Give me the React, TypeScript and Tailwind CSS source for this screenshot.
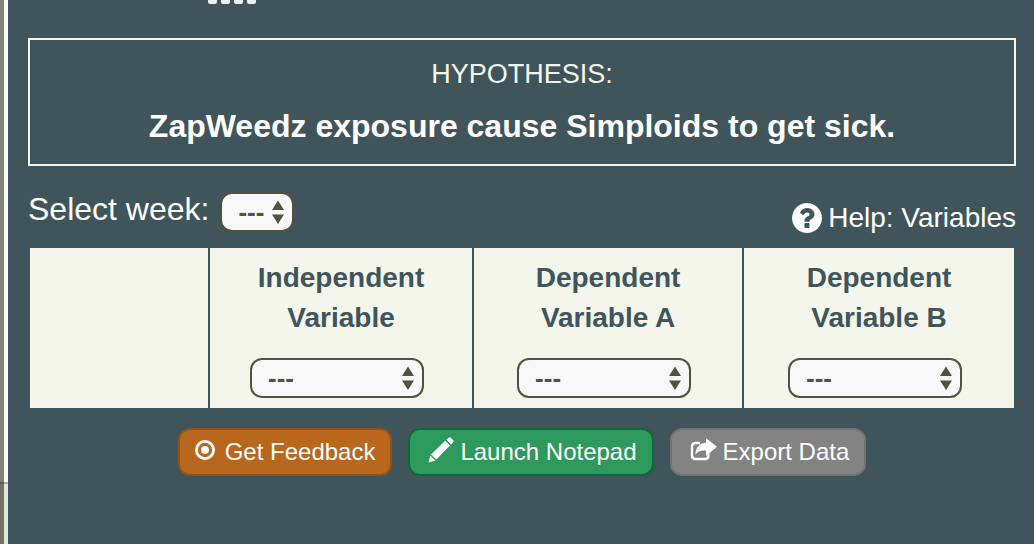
const columns = [
    { id: "independent", label: "Independent", detail: "Variable" },
    { id: "dependent-a", label: "Dependent", detail: "Variable A" },
    { id: "dependent-b", label: "Dependent", detail: "Variable B" },
];

function Picker({ id, label, className }: { id: string; label: string; className: string }) {
    return (
        <span className={`relative inline-block align-top ${className}`}>
            <select
                id={id}
                aria-label={label}
                className="block h-10 w-full appearance-none rounded-xl border-2 border-[#525240] bg-[#f8f8f8] pl-4 text-[26px] leading-9 font-bold text-[#525240]"
            >
                <option>---</option>
            </select>
            {/* up and down arrows of the select */}
            <svg viewBox="0 0 12 24" className="pointer-events-none absolute top-2 right-[10px] h-6 w-3 fill-[#525240]" aria-hidden="true">
                <path d="M6 0.5 12 10H0zM6 24 0 14.5h12z" />
            </svg>
        </span>
    );
}

function HelpIcon() {
    return (
        <svg viewBox="128 128 1536 1536" className="h-[30px] w-[30px] fill-current" aria-hidden="true">
            <path d="M1024 1376v-192q0-14-9-23t-23-9h-192q-14 0-23 9t-9 23v192q0 14 9 23t23 9h192q14 0 23-9t9-23zm256-672q0-88-55.5-163t-138.500-116-170-41q-243 0-371 213-15 24 8 42l132 100q7 6 19 6 16 0 25-12 53-68 86-92 34-24 86-24 48 0 85.500 26t37.500 59q0 38-20 61t-68 45q-63 28-115.500 86.500t-52.500 125.500v36q0 14 9 23t23 9h192q14 0 23-9t9-23q0-19 21.500-49.500t54.500-49.500q32-18 49-28.500t46-35 44.500-48 28-60.500 12.500-81zm384 192q0 209-103 385.500t-279.500 279.500-385.500 103-385.500-103-279.500-279.500-103-385.500 103-385.500 279.500-279.500 385.500-103 385.500 103 279.500 279.500 103 385.500z" />
        </svg>
    );
}

function TargetIcon() {
    return (
        <svg viewBox="0 0 20 20" className="mb-1 h-5 w-5" aria-hidden="true">
            <circle cx="10" cy="10" r="8.6" fill="none" stroke="currentColor" strokeWidth="2.8" />
            <circle cx="10" cy="10" r="4" fill="currentColor" />
        </svg>
    );
}

function PencilIcon() {
    return (
        <svg viewBox="0 0 26 26" className="mb-1 h-[26px] w-[26px] fill-current" aria-hidden="true">
            <path d="M.4 25.4 2.2 18.4 7.4 23.6zM3 17.4 17.2 3.8 22 8.6 8.4 22.6zM18.4 2.8 20.6.8Q21.8-.2 22.8.8L25 3Q26 4 25 5.2L23.1 7.5z" />
        </svg>
    );
}

function ExportIcon() {
    return (
        <svg viewBox="0 0 27 24" className="mb-1 h-6 w-[27px]" aria-hidden="true">
            <path d="M10 5H5.500Q2 5 2 8.5v9Q2 21 5.500 21h9.500Q18.500 21 18.500 17.500V15.500" fill="none" stroke="currentColor" strokeWidth="2.400" />
            <path d="M16 0 27 8.800 16 18v-5.400C11.500 12.400 8.200 13 5.400 16.800 5.600 9.500 9.800 5.200 16 4.800z" fill="currentColor" />
        </svg>
    );
}

export default function App() {
    return (
        <div className="flex min-h-screen bg-[#3f555b] font-['Liberation_Sans',Arial,sans-serif] text-white">
            {/* edge of the page behind the panel */}
            <div className="flex w-2 shrink-0 flex-col" aria-hidden="true">
                <div className="flex grow-[8] basis-0">
                    <div className="w-1 bg-[#87827b]" />
                    <div className="w-1 bg-[#fffff5]" />
                </div>
                <div className="flex h-[2px]">
                    <div className="w-1 bg-[#5d5c54]" />
                    <div className="w-1 bg-[#a9aea1]" />
                </div>
                <div className="flex grow basis-0">
                    <div className="w-1 bg-[#737468]" />
                    <div className="w-1 bg-[#e0ebdc]" />
                </div>
            </div>

            <main className="min-w-0 grow pr-[18px] pl-5">
                <div className="flex h-[38px] gap-1 pl-[180px]" aria-hidden="true">
                    <span className="h-1 w-[9px] rounded-b-xs bg-[#eeeeee]" />
                    <span className="h-1 w-[9px] rounded-b-xs bg-[#eeeeee]" />
                    <span className="h-1 w-[9px] rounded-b-xs bg-[#eeeeee]" />
                    <span className="h-1 w-[9px] rounded-b-xs bg-[#eeeeee]" />
                </div>

                <section className="border-2 border-[#f5f6eb] pt-[14px] pb-[18px] text-center">
                    <h2 className="text-[27px] leading-10 text-[#f5f6eb]">HYPOTHESIS:</h2>
                    <p className="pt-3 text-[32px] leading-10 font-bold">ZapWeedz exposure cause Simploids to get sick.</p>
                </section>

                <div className="flex items-start justify-between pt-[26px]">
                    <div className="flex gap-[11px]">
                        <label htmlFor="week" className="text-[32px] leading-[34px]">Select week:</label>
                        <Picker id="week" label="Select week" className="w-[74px]" />
                    </div>
                    <a href="#help" className="flex items-center gap-[6px] pt-2 text-[28px] leading-9">
                        <HelpIcon />
                        Help: Variables
                    </a>
                </div>

                <table className="mt-[10px] w-full table-fixed border-separate border-spacing-[2px] text-[#3f555b]">
                    <colgroup>
                        <col className="w-[18.2%]" />
                        <col className="w-[26.8%]" />
                        <col className="w-[27.4%]" />
                        <col className="w-[27.6%]" />
                    </colgroup>
                    <thead>
                        <tr>
                            <td className="bg-[#f5f6eb]" />
                            {columns.map((column) => (
                                <th key={column.id} scope="col" className="bg-[#f5f6eb] px-2 pt-[10px] pb-[10px] text-[28px] leading-10 font-bold">
                                    {column.label}
                                    <br />
                                    {column.detail}
                                    <div className="flex justify-center pt-5 pr-2">
                                        <Picker id={column.id} label={`${column.label} ${column.detail}`} className="w-[174px]" />
                                    </div>
                                </th>
                            ))}
                        </tr>
                    </thead>
                </table>

                <div className="flex justify-center gap-4 pt-[18px] text-[24px] leading-7">
                    <button type="button" className="flex h-12 items-center gap-[10px] rounded-xl border-2 border-[#91521a] bg-[#b9671c] px-[15px]">
                        <TargetIcon />
                        Get Feedback
                    </button>
                    <button type="button" className="flex h-12 items-center gap-[6px] rounded-xl border-2 border-[#0c6b38] bg-[#2d995c] pr-[15px] pl-[18px]">
                        <PencilIcon />
                        Launch Notepad
                    </button>
                    <button type="button" className="flex h-12 items-center gap-[6px] rounded-xl border-2 border-[#727272] bg-[#838383] pr-[15px] pl-[18px]">
                        <ExportIcon />
                        Export Data
                    </button>
                </div>
            </main>
        </div>
    );
}
